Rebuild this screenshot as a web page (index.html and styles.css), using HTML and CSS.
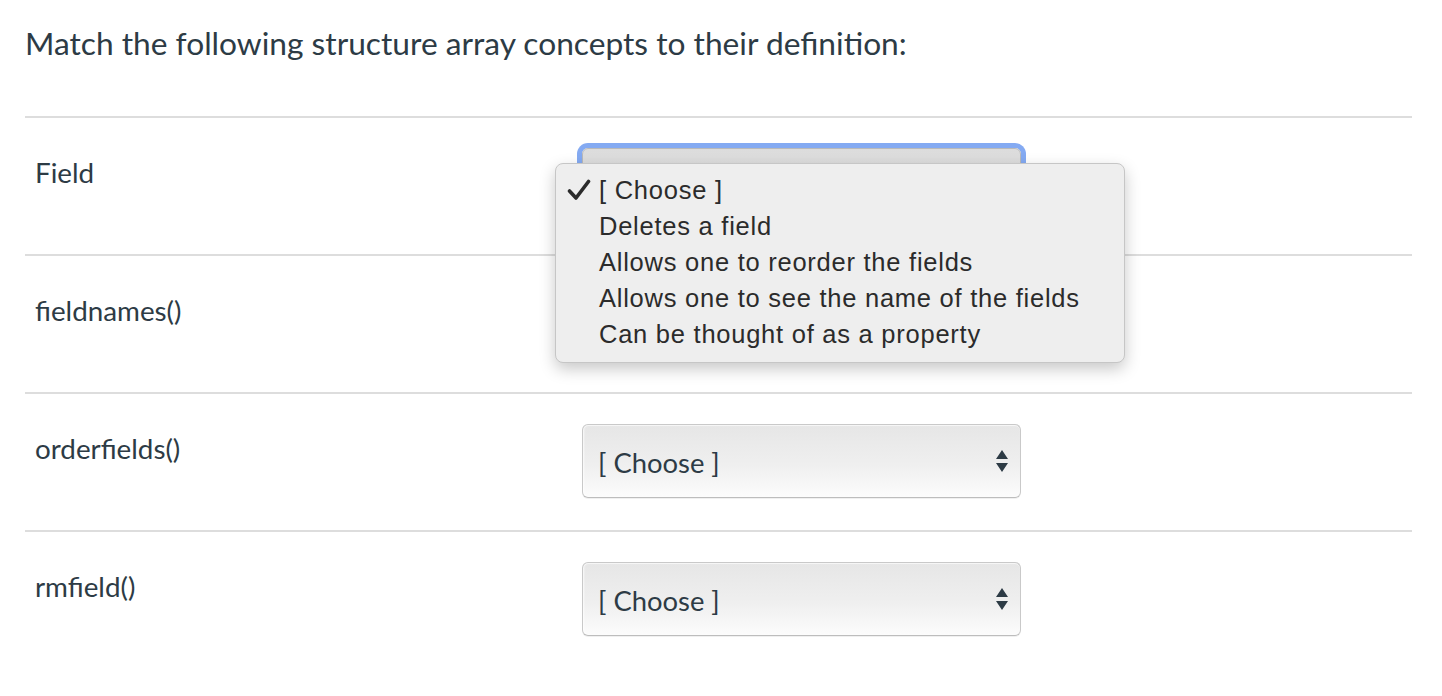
FILE: index.html
```html
<!DOCTYPE html>
<html lang="en">
<head>
    <meta charset="UTF-8">
    <title>Matching Question</title>
    <link rel="stylesheet" href="styles.css">
</head>
<body>
    <div class="question">
        <div class="question-text">Match the following structure array concepts to their definition:</div>

        <!-- Answer rows -->
        <div class="answer-row">
            <div class="answer-label">Field</div>
            <div class="select-wrap">
                <div class="select is-open">
                    <span class="select-value">[ Choose ]</span>
                    <svg class="select-arrows" width="12" height="22" viewBox="0 0 12 22"><path d="M6 0 L12 9 L0 9 Z M0 13 L12 13 L6 22 Z" fill="#2d3b45"/></svg>
                </div>

                <!-- Open option menu -->
                <ul class="option-menu">
                    <li class="option selected">
                        <svg class="check" width="24" height="22" viewBox="0 0 24 22"><path d="M2.5 12 L9 19 L21.5 2.5" fill="none" stroke="#2b2b2b" stroke-width="3.6" stroke-linecap="round" stroke-linejoin="round"/></svg>
                        [ Choose ]
                    </li>
                    <li class="option">Deletes a field</li>
                    <li class="option">Allows one to reorder the fields</li>
                    <li class="option">Allows one to see the name of the fields</li>
                    <li class="option">Can be thought of as a property</li>
                </ul>
            </div>
        </div>

        <div class="answer-row">
            <div class="answer-label">fieldnames()</div>
            <div class="select-wrap">
                <div class="select">
                    <span class="select-value">[ Choose ]</span>
                    <svg class="select-arrows" width="12" height="22" viewBox="0 0 12 22"><path d="M6 0 L12 9 L0 9 Z M0 13 L12 13 L6 22 Z" fill="#2d3b45"/></svg>
                </div>
            </div>
        </div>

        <div class="answer-row">
            <div class="answer-label">orderfields()</div>
            <div class="select-wrap">
                <div class="select">
                    <span class="select-value">[ Choose ]</span>
                    <svg class="select-arrows" width="12" height="22" viewBox="0 0 12 22"><path d="M6 0 L12 9 L0 9 Z M0 13 L12 13 L6 22 Z" fill="#2d3b45"/></svg>
                </div>
            </div>
        </div>

        <div class="answer-row">
            <div class="answer-label">rmfield()</div>
            <div class="select-wrap">
                <div class="select">
                    <span class="select-value">[ Choose ]</span>
                    <svg class="select-arrows" width="12" height="22" viewBox="0 0 12 22"><path d="M6 0 L12 9 L0 9 Z M0 13 L12 13 L6 22 Z" fill="#2d3b45"/></svg>
                </div>
            </div>
        </div>
    </div>
</body>
</html>
```

FILE: styles.css
```css
body {
    margin: 0;
    background-color: #fff;
    font-family: 'Lato', 'Open Sans', sans-serif;
    color: #2d3b45;
}

.question {
    width: 1387px;
    padding: 25px 0 0 25px;
}

.question-text {
    font-size: 31.7px;
    line-height: 36px;
    margin-bottom: 55px;
}

.answer-row {
    display: flex;
    align-items: flex-start;
    height: 136px;
    border-top: 2px solid #dddddd;
}

.answer-label {
    width: 547px;
    padding: 37px 0 0 10px;
    font-size: 27.8px;
    line-height: 36px;
}

.select-wrap {
    position: relative;
    margin-top: 30px;
}

.select {
    box-sizing: border-box;
    display: flex;
    align-items: center;
    justify-content: space-between;
    width: 439px;
    height: 74px;
    padding: 0 12px 0 15px;
    border: 1px solid #c9c9c9;
    border-bottom-color: #bdbdbd;
    border-radius: 6px;
    background: linear-gradient(to bottom, #e6e6e6 0%, #efefef 55%, #fcfcfc 100%);
    box-shadow: inset 0 1px 0 #f6f6f6, inset 1px 0 2px rgba(255, 255, 255, 0.8), 0 1px 0 rgba(0, 0, 0, 0.06);
}

.select.is-open {
    background: linear-gradient(to bottom, #dcdcdc 0%, #e4e4e4 100%);
    box-shadow: 0 0 0 5px #84aaf2;
    border-color: #b9b9b9;
}

.select-value {
    font-size: 27.4px;
    padding-top: 2px;
}

/* Native-looking open menu */
.option-menu {
    position: absolute;
    z-index: 10;
    top: 15px;
    left: -27px;
    width: 570px;
    box-sizing: border-box;
    margin: 0;
    padding: 8px 0 10px 0;
    list-style: none;
    background-color: #eeeeee;
    border: 1px solid #c6c6c6;
    border-radius: 8px;
    box-shadow: 0 6px 16px rgba(0, 0, 0, 0.22);
    font-family: 'Liberation Sans', Arial, sans-serif;
    font-size: 25.5px;
    letter-spacing: 0.75px;
    color: #2b2b2b;
}

.option {
    position: relative;
    height: 36px;
    line-height: 36px;
    padding-left: 43px;
}

.check {
    position: absolute;
    left: 11px;
    top: 7px;
}
```
